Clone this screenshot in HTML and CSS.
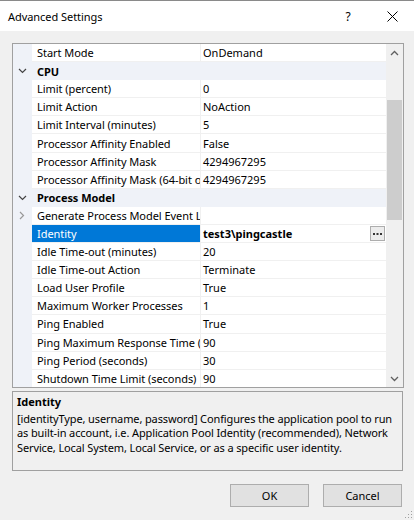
FILE: index.html
```html
<!DOCTYPE html>
<html>
<head>
<meta charset="utf-8">
<link rel="stylesheet" href="styles.css">
</head>
<body>
<div class="window">
  <div class="titlebar">
    <span class="title">Advanced Settings</span>
    <span class="tb-btn help">?</span>
    <span class="tb-btn close"><svg width="11" height="11" viewBox="0 0 11 11"><path d="M0.5 0.5 L10.5 10.5 M10.5 0.5 L0.5 10.5" stroke="#000" stroke-width="1" fill="none"/></svg></span>
  </div>
  <div class="content">
    <div class="grid">
      <div class="rows">
        <div class="row"><div class="gutter"></div><div class="name">Start Mode</div><div class="value">OnDemand</div></div>
        <div class="row cat"><div class="gutter"><svg class="chev" width="9" height="6" viewBox="0 0 9 6"><path d="M1 1 L4.5 4.5 L8 1" stroke="#444" stroke-width="1.2" fill="none"/></svg></div><div class="name">CPU</div></div>
        <div class="row"><div class="gutter"></div><div class="name">Limit (percent)</div><div class="value">0</div></div>
        <div class="row"><div class="gutter"></div><div class="name">Limit Action</div><div class="value">NoAction</div></div>
        <div class="row"><div class="gutter"></div><div class="name">Limit Interval (minutes)</div><div class="value">5</div></div>
        <div class="row"><div class="gutter"></div><div class="name">Processor Affinity Enabled</div><div class="value">False</div></div>
        <div class="row"><div class="gutter"></div><div class="name">Processor Affinity Mask</div><div class="value">4294967295</div></div>
        <div class="row"><div class="gutter"></div><div class="name">Processor Affinity Mask (64-bit option)</div><div class="value">4294967295</div></div>
        <div class="row cat"><div class="gutter"><svg class="chev" width="9" height="6" viewBox="0 0 9 6"><path d="M1 1 L4.5 4.5 L8 1" stroke="#444" stroke-width="1.2" fill="none"/></svg></div><div class="name">Process Model</div></div>
        <div class="row"><div class="gutter"><svg class="chev" width="6" height="9" viewBox="0 0 6 9"><path d="M1 1 L4.5 4.5 L1 8" stroke="#999" stroke-width="1.2" fill="none"/></svg></div><div class="name">Generate Process Model Event Log Entry</div><div class="value"></div></div>
        <div class="row sel"><div class="gutter"></div><div class="name">Identity</div><div class="value bold"><span>test3\pingcastle</span><span class="dots"><svg width="9" height="3" viewBox="0 0 9 3"><rect x="0" y="0" width="2" height="2" fill="#333"/><rect x="3.5" y="0" width="2" height="2" fill="#333"/><rect x="7" y="0" width="2" height="2" fill="#333"/></svg></span></div></div>
        <div class="row"><div class="gutter"></div><div class="name">Idle Time-out (minutes)</div><div class="value">20</div></div>
        <div class="row"><div class="gutter"></div><div class="name">Idle Time-out Action</div><div class="value">Terminate</div></div>
        <div class="row"><div class="gutter"></div><div class="name">Load User Profile</div><div class="value">True</div></div>
        <div class="row"><div class="gutter"></div><div class="name">Maximum Worker Processes</div><div class="value">1</div></div>
        <div class="row"><div class="gutter"></div><div class="name">Ping Enabled</div><div class="value">True</div></div>
        <div class="row"><div class="gutter"></div><div class="name">Ping Maximum Response Time (seconds)</div><div class="value">90</div></div>
        <div class="row"><div class="gutter"></div><div class="name">Ping Period (seconds)</div><div class="value">30</div></div>
        <div class="row"><div class="gutter"></div><div class="name">Shutdown Time Limit (seconds)</div><div class="value">90</div></div>
      </div>
      <div class="scrollbar">
        <div class="sb-arrow"><svg width="9" height="6" viewBox="0 0 9 6"><path d="M1 5 L4.5 1.5 L8 5" stroke="#606060" stroke-width="1.3" fill="none"/></svg></div>
        <div class="sb-track"><div class="sb-thumb"></div></div>
        <div class="sb-arrow"><svg width="9" height="6" viewBox="0 0 9 6"><path d="M1 1 L4.5 4.5 L8 1" stroke="#606060" stroke-width="1.3" fill="none"/></svg></div>
      </div>
    </div>
    <div class="desc">
      <div class="desc-title">Identity</div>
      <div class="desc-text">[identityType, username, password] Configures the application pool to run<br>as built-in account, i.e. Application Pool Identity (recommended), Network<br>Service, Local System, Local Service, or as a specific user identity.</div>
    </div>
    <div class="buttons">
      <button class="btn">OK</button>
      <button class="btn">Cancel</button>
    </div>
  </div>
  <svg class="grip" width="10" height="10" viewBox="0 0 10 10">
    <rect x="8" y="2" width="1" height="1" fill="#a0a0a0"/>
    <rect x="5" y="5" width="1" height="1" fill="#a0a0a0"/>
    <rect x="8" y="5" width="1" height="1" fill="#a0a0a0"/>
    <rect x="2" y="8" width="1" height="1" fill="#a0a0a0"/>
    <rect x="5" y="8" width="1" height="1" fill="#a0a0a0"/>
    <rect x="8" y="8" width="1" height="1" fill="#a0a0a0"/>
  </svg>
</div>
</body>
</html>
```

FILE: styles.css
```css
* { box-sizing: border-box; }
html, body { margin: 0; padding: 0; }
body {
  font-family: "Noto Sans", "DejaVu Sans", sans-serif;
  font-size: 11px;
  color: #000;
  background: #f0f0f0;
}
.window {
  width: 414px;
  height: 520px;
  background: #f0f0f0;
  position: relative;
  overflow: hidden;
}
.titlebar {
  height: 31px;
  background: #fff;
  border-top: 1px solid #8a8a8a;
  display: flex;
  align-items: center;
  padding-left: 8px;
}
.title {
  flex: 1;
  font-size: 11px;
  letter-spacing: -0.05px;
}
.tb-btn {
  width: 44px;
  height: 30px;
  display: flex;
  align-items: center;
  justify-content: center;
}
.help {
  font-size: 12px;
}
.content {
  padding-top: 12px;
}
.grid {
  margin: 0 10px 0 12px;
  height: 345px;
  border: 1px solid #a0a0a0;
  background: #fff;
  display: flex;
}
.rows {
  flex: 1;
  overflow: hidden;
}
.row {
  display: flex;
  height: 18.1px;
}
.gutter {
  width: 19px;
  flex: none;
  background: #eff2f8;
  display: flex;
  align-items: center;
  justify-content: center;
  padding-right: 1px;
}
.name {
  width: 169px;
  flex: none;
  padding-left: 5px;
  border-bottom: 1px solid #f0f0f0;
  border-right: 1px solid #f0f0f0;
  white-space: nowrap;
  overflow: hidden;
  display: flex;
  align-items: center;
  letter-spacing: -0.05px;
}
.value {
  flex: 1;
  padding-left: 2px;
  border-bottom: 1px solid #f0f0f0;
  white-space: nowrap;
  overflow: hidden;
  display: flex;
  align-items: center;
  justify-content: space-between;
}
.row.cat {
  background: #eff2f8;
}
.row.cat .name {
  width: auto;
  flex: 1;
  font-weight: bold;
  border: none;
}
.row.sel .name {
  background: #0078d7;
  color: #fff;
}
.value.bold {
  font-weight: bold;
}
.dots {
  width: 15px;
  height: 15px;
  margin-right: 1px;
  border: 1px solid #adadad;
  background: #ececec;
  display: flex;
  align-items: flex-end;
  justify-content: center;
  padding-bottom: 4px;
}
.scrollbar {
  width: 17px;
  flex: none;
  background: #f0f0f0;
  display: flex;
  flex-direction: column;
}
.sb-arrow {
  height: 17px;
  display: flex;
  align-items: center;
  justify-content: center;
}
.sb-track {
  flex: 1;
  padding: 39px 1px 0 1px;
}
.sb-thumb {
  height: 120px;
  background: #cdcdcd;
}
.desc {
  margin: 3px 11px 0 12px;
  height: 80px;
  border: 1px solid #a0a0a0;
  background: #f0f0f0;
  padding: 3px 4px 0 4px;
  line-height: 14.5px;
}
.desc-title {
  font-weight: bold;
  margin-bottom: 2px;
}
.desc-text {
  white-space: nowrap;
  letter-spacing: -0.12px;
}
.buttons {
  display: flex;
  justify-content: flex-end;
  gap: 14px;
  padding-right: 12px;
  margin-top: 13px;
}
.btn {
  width: 79px;
  height: 23px;
  background: #e1e1e1;
  border: 1px solid #adadad;
  font-family: inherit;
  font-size: 11px;
  color: #000;
  padding: 0;
}
.grip {
  position: absolute;
  right: 1px;
  bottom: 1px;
}
```
